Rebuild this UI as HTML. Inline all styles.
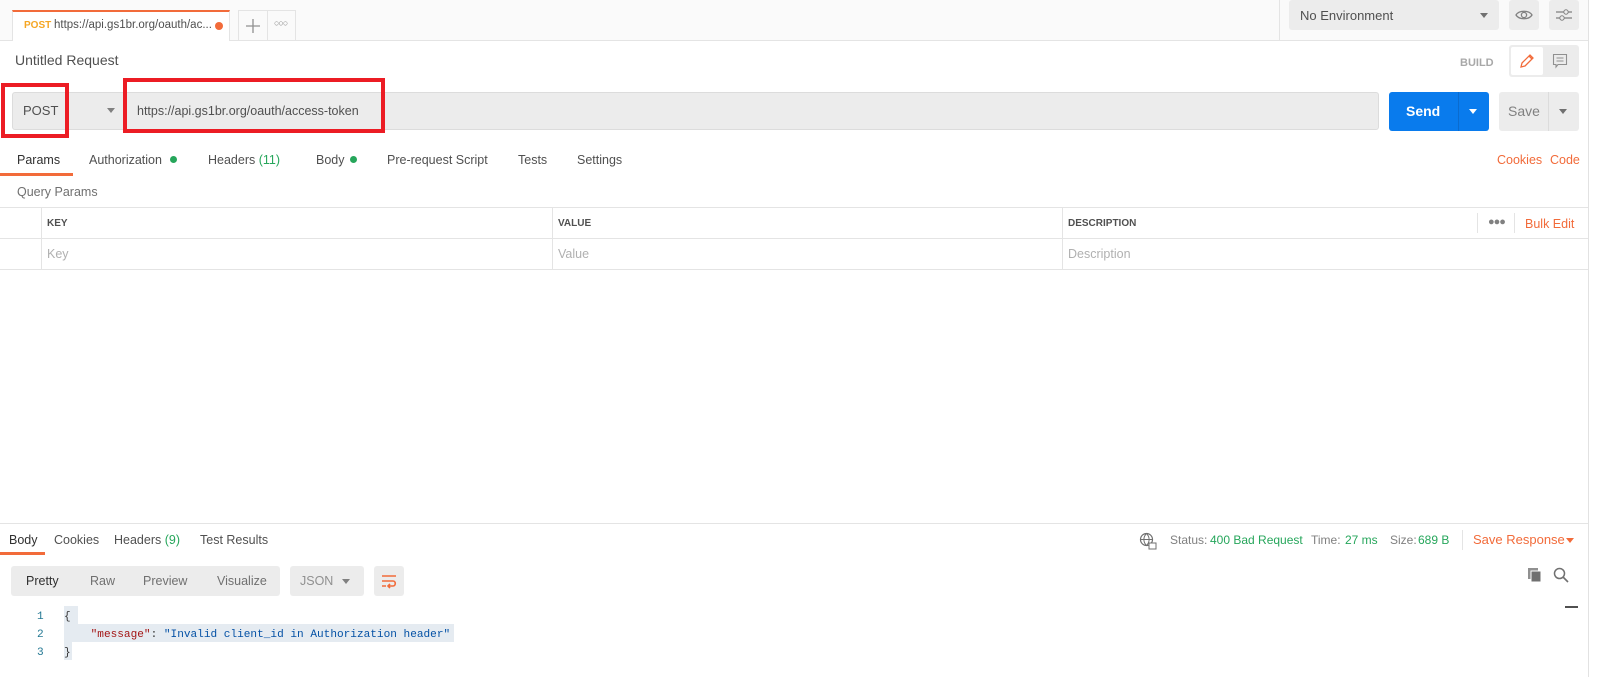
<!DOCTYPE html>
<html><head><meta charset="utf-8"><style>
*{box-sizing:border-box;margin:0;padding:0}
body{width:1598px;height:677px;background:#fff;font-family:"Liberation Sans",sans-serif;font-size:12px;color:#505050;position:relative;overflow:hidden}
.a{position:absolute}
.t{position:absolute;white-space:nowrap;line-height:16px}
.mono{font-family:"Liberation Mono",monospace;font-size:11.1px}
</style></head><body>
<div class="a" style="left:0;top:0;width:1589px;height:677px;border-right:1px solid #e2e2e2"></div>
<div class="a" style="left:0;top:0;width:1588px;height:41px;background:#fafafa;border-bottom:1px solid #e4e4e4"></div>
<div class="a" style="left:12px;top:10px;width:218px;height:31px;background:#fff;border:1px solid #e4e4e4;border-bottom:none;border-top:2px solid #f26b3a"></div>
<div class="t" style="left:24px;top:18px;font-size:10px;font-weight:bold;color:#f5a623">POST</div>
<div class="t" style="left:54px;top:17px;font-size:11.5px;color:#505050">https://api.gs1br.org/oauth/ac...</div>
<div class="a" style="left:215px;top:22px;width:8px;height:8px;border-radius:50%;background:#f26b3a"></div>
<div class="a" style="left:238px;top:10px;width:58px;height:30px;border:1px solid #e4e4e4;border-bottom:none;background:#fafafa"></div>
<div class="a" style="left:267px;top:10px;width:1px;height:30px;background:#e4e4e4"></div>
<svg class="a" style="left:245px;top:18px" width="16" height="16"><path d="M8 1V15M1 8H15" stroke="#909090" stroke-width="1.3"/></svg>
<div class="t" style="left:274px;top:15px;font-size:9px;color:#808080;letter-spacing:-1px">○○○</div>
<div class="a" style="left:1279px;top:0;width:1px;height:40px;background:#e4e4e4"></div>
<div class="a" style="left:1289px;top:0;width:210px;height:30px;background:#ececec;border-radius:3px"></div>
<div class="t" style="left:1300px;top:8px;font-size:13px;color:#505050">No Environment</div>
<div class="a" style="left:1480px;top:13px;border:4px solid transparent;border-top:5px solid #707070"></div>
<div class="a" style="left:1509px;top:0;width:30px;height:30px;background:#ececec;border-radius:3px"></div>
<svg class="a" style="left:1514px;top:7px" width="20" height="16" viewBox="0 0 20 16"><path d="M2 8C5 3 15 3 18 8C15 13 5 13 2 8Z" fill="none" stroke="#808080" stroke-width="1.3"/><circle cx="10" cy="8" r="2.6" fill="none" stroke="#808080" stroke-width="1.3"/></svg>
<div class="a" style="left:1549px;top:0;width:30px;height:30px;background:#ececec;border-radius:3px"></div>
<svg class="a" style="left:1555px;top:7px" width="18" height="16"><path d="M1 5H17M1 11H17" stroke="#808080" stroke-width="1.2"/><circle cx="11" cy="5" r="2.2" fill="#ececec" stroke="#808080"/><circle cx="7" cy="11" r="2.2" fill="#ececec" stroke="#808080"/></svg>
<div class="t" style="left:15px;top:52px;font-size:14px;color:#505050">Untitled Request</div>
<div class="t" style="left:1460px;top:55px;font-size:11px;font-weight:bold;color:#a8a8a8">BUILD</div>
<div class="a" style="left:1509px;top:45px;width:70px;height:32px;background:#ececec;border-radius:3px"></div>
<div class="a" style="left:1511px;top:47px;width:32px;height:28px;background:#fff;border-radius:2px"></div>
<svg class="a" style="left:1518px;top:52px" width="18" height="18"><path d="M3 15L4 11L12 3L15 6L7 14Z M11 4L14 7" fill="none" stroke="#f26b3a" stroke-width="1.3"/></svg>
<svg class="a" style="left:1552px;top:53px" width="16" height="16"><path d="M1.5 1.5H14.5V11.5H6L4 14V11.5H1.5Z M4.5 5H11.5M4.5 8H11.5" fill="none" stroke="#909090" stroke-width="1.1"/></svg>
<div class="a" style="left:12px;top:92px;width:114px;height:38px;background:#ececec;border:1px solid #dcdcdc;border-radius:3px 0 0 3px"></div>
<div class="t" style="left:23px;top:103px;font-size:13px;color:#505050">POST</div>
<div class="a" style="left:107px;top:108px;border:4px solid transparent;border-top:5px solid #808080"></div>
<div class="a" style="left:125px;top:92px;width:1254px;height:38px;background:#ececec;border:1px solid #dcdcdc;border-radius:0 3px 3px 0"></div>
<div class="t" style="left:137px;top:103px;font-size:12.5px;color:#505050">https://api.gs1br.org/oauth/access-token</div>
<div class="a" style="left:1px;top:83px;width:68px;height:55px;border:4px solid #ec1c24"></div>
<div class="a" style="left:123px;top:78px;width:262px;height:55px;border:4px solid #ec1c24"></div>
<div class="a" style="left:1389px;top:92px;width:100px;height:39px;background:#097bed;border-radius:3px"></div>
<div class="a" style="left:1458px;top:92px;width:1px;height:39px;background:#0a6bcf"></div>
<div class="t" style="left:1406px;top:103px;font-size:14px;font-weight:bold;color:#fff">Send</div>
<div class="a" style="left:1469px;top:109px;border:4px solid transparent;border-top:5px solid #fff"></div>
<div class="a" style="left:1499px;top:92px;width:80px;height:39px;background:#ececec;border-radius:3px"></div>
<div class="a" style="left:1548px;top:92px;width:1px;height:39px;background:#dcdcdc"></div>
<div class="t" style="left:1508px;top:103px;font-size:14px;color:#808080">Save</div>
<div class="a" style="left:1559px;top:109px;border:4px solid transparent;border-top:5px solid #707070"></div>
<div class="t" style="left:17px;top:152px;font-size:12.5px;color:#303030">Params</div>
<div class="a" style="left:0;top:173px;width:73px;height:3px;background:#f26b3a"></div>
<div class="t" style="left:89px;top:152px;font-size:12.5px">Authorization</div>
<div class="a" style="left:170px;top:156px;width:7px;height:7px;border-radius:50%;background:#26a65b"></div>
<div class="t" style="left:208px;top:152px;font-size:12.5px">Headers <span style="color:#26a65b">(11)</span></div>
<div class="t" style="left:316px;top:152px;font-size:12.5px">Body</div>
<div class="a" style="left:350px;top:156px;width:7px;height:7px;border-radius:50%;background:#26a65b"></div>
<div class="t" style="left:387px;top:152px;font-size:12.5px">Pre-request Script</div>
<div class="t" style="left:518px;top:152px;font-size:12.5px">Tests</div>
<div class="t" style="left:577px;top:152px;font-size:12.5px">Settings</div>
<div class="t" style="left:1497px;top:152px;font-size:12.5px;color:#f26b3a">Cookies</div>
<div class="t" style="left:1550px;top:152px;font-size:12.5px;color:#f26b3a">Code</div>
<div class="t" style="left:17px;top:184px;font-size:12.5px;color:#707070">Query Params</div>
<div class="a" style="left:0;top:207px;width:1588px;height:1px;background:#e4e4e4"></div>
<div class="a" style="left:0;top:238px;width:1588px;height:1px;background:#e4e4e4"></div>
<div class="a" style="left:0;top:269px;width:1588px;height:1px;background:#e4e4e4"></div>
<div class="a" style="left:41px;top:207px;width:1px;height:62px;background:#e4e4e4"></div>
<div class="a" style="left:552px;top:207px;width:1px;height:62px;background:#e4e4e4"></div>
<div class="a" style="left:1062px;top:207px;width:1px;height:62px;background:#e4e4e4"></div>
<div class="a" style="left:1477px;top:213px;width:1px;height:20px;background:#e4e4e4"></div>
<div class="a" style="left:1514px;top:213px;width:1px;height:20px;background:#e4e4e4"></div>
<div class="t" style="left:47px;top:216px;font-size:10px;font-weight:bold;color:#505050">KEY</div>
<div class="t" style="left:558px;top:216px;font-size:10px;font-weight:bold;color:#505050">VALUE</div>
<div class="t" style="left:1068px;top:216px;font-size:10px;font-weight:bold;color:#505050">DESCRIPTION</div>
<div class="t" style="left:1488px;top:214px;font-size:11px;color:#808080;letter-spacing:-1px">●●●</div>
<div class="t" style="left:1525px;top:216px;font-size:12.5px;color:#f26b3a">Bulk Edit</div>
<div class="t" style="left:47px;top:246px;font-size:12.5px;color:#b0b0b0">Key</div>
<div class="t" style="left:558px;top:246px;font-size:12.5px;color:#b0b0b0">Value</div>
<div class="t" style="left:1068px;top:246px;font-size:12.5px;color:#b0b0b0">Description</div>
<div class="a" style="left:0;top:523px;width:1588px;height:1px;background:#e4e4e4"></div>
<div class="t" style="left:9px;top:532px;font-size:12.5px;color:#303030">Body</div>
<div class="a" style="left:0;top:552px;width:45px;height:3px;background:#f26b3a"></div>
<div class="t" style="left:54px;top:532px;font-size:12.5px">Cookies</div>
<div class="t" style="left:114px;top:532px;font-size:12.5px">Headers <span style="color:#26a65b">(9)</span></div>
<div class="t" style="left:200px;top:532px;font-size:12.5px">Test Results</div>
<svg class="a" style="left:1139px;top:532px" width="18" height="18"><circle cx="7.5" cy="7.5" r="6" fill="none" stroke="#707070" stroke-width="1.2"/><path d="M1.5 7.5H13.5M7.5 1.5C4 5 4 10 7.5 13.5M7.5 1.5C11 5 11 10 7.5 13.5" fill="none" stroke="#707070"/><rect x="10" y="11" width="7" height="6" fill="#fff" stroke="#707070"/></svg>
<div class="t" style="left:1170px;top:532px;font-size:12px;color:#808080">Status:</div>
<div class="t" style="left:1210px;top:532px;font-size:12px;color:#26a65b">400 Bad Request</div>
<div class="t" style="left:1311px;top:532px;font-size:12px;color:#808080">Time:</div>
<div class="t" style="left:1345px;top:532px;font-size:12px;color:#26a65b">27 ms</div>
<div class="t" style="left:1390px;top:532px;font-size:12px;color:#808080">Size:</div>
<div class="t" style="left:1418px;top:532px;font-size:12px;color:#26a65b">689 B</div>
<div class="a" style="left:1462px;top:530px;width:1px;height:20px;background:#e4e4e4"></div>
<div class="t" style="left:1473px;top:532px;font-size:13px;color:#f26b3a">Save Response</div>
<div class="a" style="left:1566px;top:538px;border:4px solid transparent;border-top:5px solid #f26b3a"></div>
<div class="a" style="left:11px;top:566px;width:269px;height:30px;background:#ececec;border-radius:3px"></div>
<div class="t" style="left:26px;top:573px;font-size:12.5px;color:#303030">Pretty</div>
<div class="t" style="left:90px;top:573px;font-size:12.5px;color:#707070">Raw</div>
<div class="t" style="left:143px;top:573px;font-size:12.5px;color:#707070">Preview</div>
<div class="t" style="left:217px;top:573px;font-size:12.5px;color:#707070">Visualize</div>
<div class="a" style="left:290px;top:566px;width:74px;height:30px;background:#ececec;border-radius:3px"></div>
<div class="t" style="left:300px;top:573px;font-size:12.5px;color:#909090">JSON</div>
<div class="a" style="left:342px;top:579px;border:4px solid transparent;border-top:5px solid #808080"></div>
<div class="a" style="left:374px;top:566px;width:30px;height:30px;background:#ececec;border-radius:3px"></div>
<svg class="a" style="left:380px;top:572px" width="18" height="18"><path d="M2 4H16M2 9H13C16 9 16 14 13 14H9M2 14H6M10 12L8 14L10 16" fill="none" stroke="#f26b3a" stroke-width="1.6"/></svg>
<svg class="a" style="left:1527px;top:567px" width="16" height="16"><rect x="1" y="1" width="10" height="11" fill="#909090"/><rect x="4" y="4" width="10" height="11" fill="#707070" stroke="#fff" stroke-width="1"/></svg>
<svg class="a" style="left:1553px;top:567px" width="16" height="16"><circle cx="6.5" cy="6.5" r="5" fill="none" stroke="#707070" stroke-width="1.5"/><path d="M10 10L15 15" stroke="#707070" stroke-width="1.6"/></svg>
<div class="a" style="left:1565px;top:606px;width:13px;height:2px;background:#505050"></div>
<div class="a" style="left:64px;top:606px;width:14px;height:18px;background:#e5ebf1"></div>
<div class="a" style="left:64px;top:624px;width:390px;height:18px;background:#e5ebf1"></div>
<div class="a" style="left:64px;top:642px;width:8px;height:18px;background:#e5ebf1"></div>
<div class="t mono" style="left:37px;top:609px;color:#237893">1</div>
<div class="t mono" style="left:37px;top:627px;color:#237893">2</div>
<div class="t mono" style="left:37px;top:645px;color:#237893">3</div>
<div class="t mono" style="left:64px;top:609px;color:#333">{</div>
<div class="t mono" style="left:64px;top:627px;color:#333">&nbsp;&nbsp;&nbsp;&nbsp;<span style="color:#a31515">"message"</span>: <span style="color:#0451a5">"Invalid client_id in Authorization header"</span></div>
<div class="t mono" style="left:64px;top:645px;color:#333">}</div>
</body></html>
